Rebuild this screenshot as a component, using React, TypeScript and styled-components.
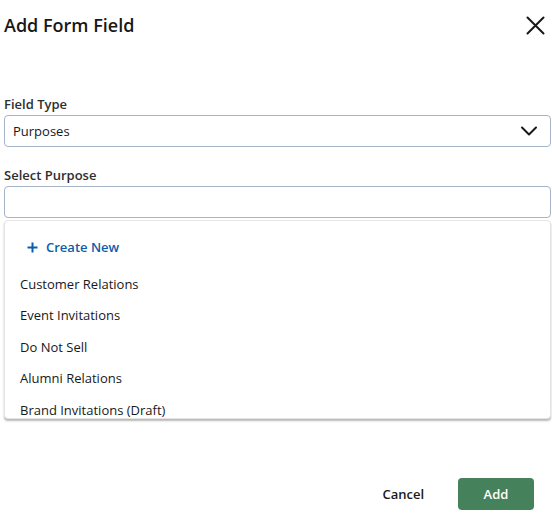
import styled, { createGlobalStyle } from "styled-components";

const purposes = [
  "Customer Relations",
  "Event Invitations",
  "Do Not Sell",
  "Alumni Relations",
  "Brand Invitations (Draft)",
];

export default function App() {
  return (
    <>
      <GlobalStyle />
      <Modal>
        <Header>
          <Title>Add Form Field</Title>
          <CloseButton aria-label="Close">
            <svg width="19" height="19" viewBox="0 0 19 19">
              <path d="M1.5 1.5 L17.5 17.5 M17.5 1.5 L1.5 17.5" stroke="#181818" strokeWidth="2" strokeLinecap="round" />
            </svg>
          </CloseButton>
        </Header>

        <Form>
          <Field>
            <Label>Field Type</Label>
            <Select>
              <span>Purposes</span>
              <svg width="16" height="10" viewBox="0 0 16 10">
                <path d="M1 1.5 L8 8.5 L15 1.5" stroke="#181818" strokeWidth="2" fill="none" strokeLinecap="round" strokeLinejoin="round" />
              </svg>
            </Select>
          </Field>

          <Field>
            <Label>Select Purpose</Label>
            <ComboWrap>
              <Input />
              <Dropdown>
                <CreateNew>
                  <svg width="11" height="11" viewBox="0 0 11 11">
                    <path d="M5.5 0.5 V10.5 M0.5 5.5 H10.5" stroke="#0b5cab" strokeWidth="2" />
                  </svg>
                  Create New
                </CreateNew>
                {purposes.map((p) => (
                  <Option key={p}>{p}</Option>
                ))}
              </Dropdown>
            </ComboWrap>
          </Field>
        </Form>

        <Footer>
          <TextButton>Cancel</TextButton>
          <PrimaryButton>Add</PrimaryButton>
        </Footer>
      </Modal>
    </>
  );
}

const GlobalStyle = createGlobalStyle`
  body {
    margin: 0;
    background: #ffffff;
    font-family: "Open Sans", Lato, sans-serif;
    color: #181818;
  }
`;

const Modal = styled.div`
  width: 552px;
  height: 528px;
  box-sizing: border-box;
  padding: 0 1px 0 4px;
  display: flex;
  flex-direction: column;
  background: #fff;
`;

const Header = styled.div`
  height: 50px;
  display: flex;
  align-items: center;
  justify-content: space-between;
`;

const Title = styled.h1`
  margin: 0;
  font-size: 18px;
  font-weight: 600;
  color: #181818;
`;

const CloseButton = styled.button`
  border: none;
  background: none;
  padding: 0;
  margin-right: 6px;
  display: flex;
  cursor: pointer;
`;

const Form = styled.div`
  margin-top: 45px;
  display: flex;
  flex-direction: column;
  gap: 19px;
`;

const Field = styled.div`
  display: flex;
  flex-direction: column;
  gap: 2px;
`;

const Label = styled.label`
  font-size: 13px;
  line-height: 18px;
  font-weight: 600;
  color: #2e2e2e;
`;

const Select = styled.div`
  height: 32px;
  box-sizing: border-box;
  border: 1px solid #a6b4c8;
  border-radius: 4px;
  padding: 0 13px 0 8px;
  display: flex;
  align-items: center;
  justify-content: space-between;
  font-size: 13px;
  color: #181818;
`;

const ComboWrap = styled.div`
  position: relative;
`;

const Input = styled.input`
  display: block;
  width: 100%;
  height: 32px;
  box-sizing: border-box;
  border: 1px solid #a6b4c8;
  border-radius: 4px;
  outline: none;
  font: inherit;
`;

const Dropdown = styled.div`
  position: absolute;
  left: 0;
  right: 0;
  top: 34px;
  height: 199px;
  box-sizing: border-box;
  padding-top: 5px;
  overflow: hidden;
  background: #fff;
  border: 1px solid #e5e5e5;
  border-radius: 4px;
  box-shadow: 0 2px 2px rgba(0, 0, 0, 0.28);
`;

const CreateNew = styled.div`
  height: 42px;
  display: flex;
  align-items: center;
  gap: 8px;
  padding-left: 22px;
  font-size: 13px;
  font-weight: 600;
  color: #0b5cab;
`;

const Option = styled.div`
  height: 31.5px;
  display: flex;
  align-items: center;
  padding-left: 15px;
  font-size: 13px;
  color: #181818;
`;

const Footer = styled.div`
  margin-top: auto;
  padding: 0 17px 18px 0;
  display: flex;
  justify-content: flex-end;
  align-items: center;
  gap: 18px;
`;

const TextButton = styled.button`
  border: none;
  background: none;
  height: 32px;
  padding: 0 16px;
  font-family: inherit;
  font-size: 13px;
  font-weight: 600;
  color: #181818;
  cursor: pointer;
`;

const PrimaryButton = styled.button`
  width: 76px;
  height: 32px;
  border: none;
  border-radius: 4px;
  background: #45815a;
  font-family: inherit;
  font-size: 13px;
  font-weight: 600;
  color: #fff;
  cursor: pointer;
`;
